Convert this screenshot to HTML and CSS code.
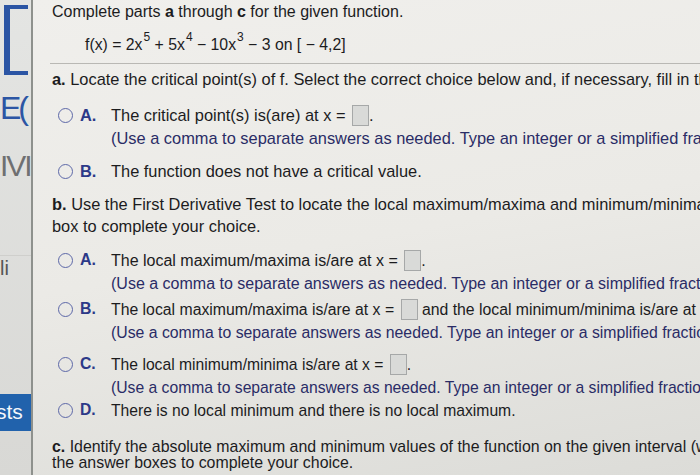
FILE: index.html
```html
<!DOCTYPE html>
<html>
<head>
  <meta charset="utf-8">
  <title>Critical points</title>
  <link rel="stylesheet" href="styles.css">
</head>
<body>
  <div class="page">
    <aside class="side">
      <div class="side-logo"></div>
      <div class="side-word blue">E(</div>
      <div class="side-word gray">IVI</div>
      <div class="side-item">li</div>
      <div class="side-active">sts</div>
    </aside>

    <main class="content">
      <div class="question">
        <p class="intro">Complete parts <b>a</b> through <b>c</b> for the given function.</p>
        <p class="func">f(x) = 2x<sup>5</sup> + 5x<sup>4</sup> &minus; 10x<sup>3</sup> &minus; 3 on [ &minus; 4,2]</p>
      </div>

      <div class="part part-a">
        <p class="prompt"><b>a.</b> Locate the critical point(s) of f. Select the correct choice below and, if necessary, fill in the answer box to complete your choice.</p>
        <ul class="choices">
          <li class="choice">
            <span class="radio"></span><span class="letter">A.</span>
            <div class="body">
              <div>The critical point(s) is(are) at x = <span class="box"></span>.</div>
              <div class="hint">(Use a comma to separate answers as needed. Type an integer or a simplified fraction.)</div>
            </div>
          </li>
          <li class="choice">
            <span class="radio"></span><span class="letter">B.</span>
            <div class="body">
              <div>The function does not have a critical value.</div>
            </div>
          </li>
        </ul>
      </div>

      <div class="part part-b">
        <p class="prompt"><b>b.</b> Use the First Derivative Test to locate the local maximum/maxima and minimum/minima of f. Select the correct choice below and, if necessary, fill in the answer</p>
        <p class="prompt-cont">box to complete your choice.</p>
        <ul class="choices">
          <li class="choice choice-a">
            <span class="radio"></span><span class="letter">A.</span>
            <div class="body">
              <div>The local maximum/maxima is/are at x = <span class="box"></span>.</div>
              <div class="hint">(Use a comma to separate answers as needed. Type an integer or a simplified fraction.)</div>
            </div>
          </li>
          <li class="choice choice-b">
            <span class="radio"></span><span class="letter">B.</span>
            <div class="body">
              <div>The local maximum/maxima is/are at x = <span class="box"></span> and the local minimum/minima is/are at x = <span class="box"></span>.</div>
              <div class="hint">(Use a comma to separate answers as needed. Type an integer or a simplified fraction.)</div>
            </div>
          </li>
          <li class="choice choice-c">
            <span class="radio"></span><span class="letter">C.</span>
            <div class="body">
              <div>The local minimum/minima is/are at x = <span class="box"></span>.</div>
              <div class="hint">(Use a comma to separate answers as needed. Type an integer or a simplified fraction.)</div>
            </div>
          </li>
          <li class="choice choice-d">
            <span class="radio"></span><span class="letter">D.</span>
            <div class="body">
              <div>There is no local minimum and there is no local maximum.</div>
            </div>
          </li>
        </ul>
      </div>

      <div class="part part-c">
        <p class="prompt"><b>c.</b> Identify the absolute maximum and minimum values of the function on the given interval (when they exist). Select the correct choice below and, if necessary, fill in</p>
        <p class="prompt-cont">the answer boxes to complete your choice.</p>
      </div>
    </main>
  </div>
</body>
</html>
```

FILE: styles.css
```css
* {
  margin: 0;
  padding: 0;
  box-sizing: border-box;
}

html, body {
  width: 700px;
  height: 475px;
  overflow: hidden;
}

body {
  font-family: 'Liberation Sans', Arial, sans-serif;
  background: #e6e5e1;
  color: #1c1c1e;
}

.page {
  display: flex;
  height: 475px;
}

/* left nav, mostly cut off by the photo */
.side {
  width: 33px;
  flex-shrink: 0;
  background: linear-gradient(180deg, #e4e5e3, #d8d8d5);
  border-right: 2px solid #8e918d;
  display: flex;
  flex-direction: column;
  overflow: hidden;
}

.side-logo {
  width: 24px;
  height: 70px;
  margin: 5px 0 0 4px;
  border: 4px solid #2b55a4;
  border-right: none;
  border-left-width: 6px;
}

.side-word {
  font-size: 32px;
  line-height: 34px;
  letter-spacing: -3px;
  white-space: nowrap;
}

.side-word.blue {
  color: #2b55a4;
  margin-top: 16px;
}

.side-word.gray {
  color: #6f7072;
  margin-top: 24px;
  letter-spacing: -2px;
  font-size: 30px;
}

.side-item {
  font-size: 20px;
  line-height: 24px;
  color: #555;
  margin-top: 72px;
  border-top: 1px solid #cfcfcc;
}

.side-active {
  margin-top: 114px;
  height: 37px;
  background: #2162ac;
  color: #f4f6fb;
  font-size: 21px;
  line-height: 36px;
  text-indent: -4px;
}

.content {
  flex: 1;
  padding: 2px 0 0 19px;
  white-space: nowrap;
  overflow: hidden;
  background: linear-gradient(170deg, #f0efec 0%, #ebeae6 50%, #dcdcd8 100%);
  font-size: 16.4px;
}

.question {
  padding-bottom: 5px;
  border-bottom: 1px solid #b9b8b4;
  margin-left: -2px;
  padding-left: 2px;
}

.intro {
  line-height: 20px;
  font-size: 16px;
}

.func {
  padding-left: 33px;
  line-height: 26px;
  padding-top: 10px;
  font-size: 15.8px;
}

sup {
  font-size: 12px;
  vertical-align: 9px;
  line-height: 0;
  margin-left: 1px;
}

.prompt, .prompt-cont {
  line-height: 22px;
}

.choices {
  list-style: none;
  display: flex;
  flex-direction: column;
  gap: 4px;
}

.choice {
  display: flex;
  align-items: flex-start;
  padding-left: 6px;
}

.radio {
  width: 15px;
  height: 15px;
  border: 1.6px solid #5d68a8;
  border-radius: 50%;
  margin-top: 3px;
  flex-shrink: 0;
}

.letter {
  width: 38px;
  padding-left: 7px;
  font-weight: bold;
  color: #2c3988;
  flex-shrink: 0;
  line-height: 20px;
}

.body {
  line-height: 23px;
  margin-top: -1px;
}

.hint {
  color: #2a2c66;
}

.box {
  display: inline-block;
  width: 17px;
  height: 21px;
  vertical-align: -5px;
  background: #d9dad8;
  border: 1px solid #a6a8a8;
  margin-left: 2px;
}

.part-a {
  margin-top: 4px;
}

.part-a .choices {
  margin-top: 15px;
  gap: 11px;
}

.part-b {
  margin-top: 10px;
}

.part-b .choices {
  margin-top: 13px;
}

.choice-a {
  font-size: 16px;
}

.choice-b {
  font-size: 15.8px;
}

.choice-c {
  margin-top: 6px;
  font-size: 15.7px;
}

.choice-d {
  margin-top: -3px;
  font-size: 15.7px;
}

.part-c {
  margin-top: 17px;
  font-size: 15.9px;
}

.part-c .prompt, .part-c .prompt-cont {
  line-height: 16px;
}
```
